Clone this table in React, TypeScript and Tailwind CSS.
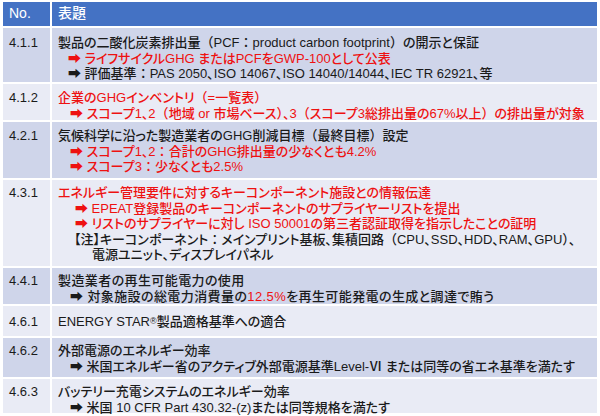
import React from "react";

type Seg = { t: string; red?: boolean };
type Line = { segs: Seg[]; indent: string };
type Row = { no: string; dark: boolean; h: string; pt: string; lines: Line[] };

const L = (indent: string, ...segs: Seg[]): Line => ({ indent, segs });
const B = (t: string): Seg => ({ t });
const R = (t: string): Seg => ({ t, red: true });

const ROWS: Row[] = [
  {
    no: "4.1.1",
    dark: true,
    h: "h-[56px]",
    pt: "pt-[7px]",
    lines: [
      L("pl-0", B("製品の二酸化炭素排出量（PCF：product carbon footprint）の開示と保証")),
      L("pl-[10px]", R("➡ ライフサイクルGHG またはPCFをGWP-100として公表")),
      L("pl-[10px]", B("➡ 評価基準：PAS 2050、ISO 14067、ISO 14040/14044、IEC TR 62921、等")),
    ],
  },
  {
    no: "4.1.2",
    dark: false,
    h: "h-[38px]",
    pt: "pt-[6px]",
    lines: [
      L("pl-0", R("企業のGHGインベントリ（=一覧表）")),
      L("pl-[12px]", R("➡ スコープ1、2（地域 or 市場ベース）、3（スコープ3総排出量の67%以上）の排出量が対象")),
    ],
  },
  {
    no: "4.2.1",
    dark: true,
    h: "h-[58px]",
    pt: "pt-[6px]",
    lines: [
      L("pl-0", B("気候科学に沿った製造業者のGHG削減目標（最終目標）設定")),
      L("pl-[12px]", R("➡ スコープ1、2：合計のGHG排出量の少なくとも4.2%")),
      L("pl-[12px]", R("➡ スコープ3：少なくとも2.5%")),
    ],
  },
  {
    no: "4.3.1",
    dark: false,
    h: "h-[88px]",
    pt: "pt-[5px]",
    lines: [
      L("pl-0", R("エネルギー管理要件に対するキーコンポーネント施設との情報伝達")),
      L("pl-[17px]", R("➡ EPEAT登録製品のキーコンポーネントのサプライヤーリストを提出")),
      L("pl-[17px]", R("➡ リストのサプライヤーに対し ISO 50001の第三者認証取得を指示したことの証明")),
      L("pl-[16px]", B("【注】キーコンポーネント：メインプリント基板、集積回路（CPU、SSD、HDD、RAM、GPU）、")),
      L("pl-[34px]", B("電源ユニット、ディスプレイパネル")),
    ],
  },
  {
    no: "4.4.1",
    dark: true,
    h: "h-[38px]",
    pt: "pt-[5px]",
    lines: [
      L("pl-0 tracking-[0.4px]", B("製造業者の再生可能電力の使用")),
      L("pl-[12px] tracking-[0.4px]", B("➡ 対象施設の総電力消費量の"), R("12.5%"), B("を再生可能発電の生成と調達で賄う")),
    ],
  },
  {
    no: "4.6.1",
    dark: false,
    h: "h-[32px]",
    pt: "pt-[8px]",
    lines: [L("pl-0", B("ENERGY STAR"), { t: "®" }, B("製品適格基準への適合"))],
  },
  {
    no: "4.6.2",
    dark: true,
    h: "h-[41px]",
    pt: "pt-[5px]",
    lines: [
      L("pl-0", B("外部電源のエネルギー効率")),
      L("pl-[12px]", B("➡ 米国エネルギー省のアクティブ外部電源基準Level-Ⅵ または同等の省エネ基準を満たす")),
    ],
  },
  {
    no: "4.6.3",
    dark: false,
    h: "h-[36px]",
    pt: "pt-[5px]",
    lines: [
      L("pl-0", B("バッテリー充電システムのエネルギー効率")),
      L("pl-[12px]", B("➡ 米国 10 CFR Part 430.32-(z)または同等規格を満たす")),
    ],
  },
];

// full-width brackets and colons keep their full width, the rest stays proportional
function Text({ t }: { t: string }) {
  const parts = t.split(/([（）：])/);
  return (
    <>
      {parts.map((p, i) =>
        /^[（）：]$/.test(p) ? (
          <span key={i} className="[font-feature-settings:normal]">
            {p}
          </span>
        ) : (
          p
        )
      )}
    </>
  );
}

export default function App() {
  return (
    <div
      className="w-[600px] h-[416px] bg-white overflow-hidden px-[3px] pt-[2px] text-[13px] leading-[15.5px] font-medium text-[#1a1a1a] [font-feature-settings:'palt']"
      style={{ fontFamily: '"Liberation Sans", "Noto Sans CJK JP", sans-serif' }}
    >
      {/* Header */}
      <div className="flex h-[26px] border-b-2 border-white">
        <div className="w-[49px] shrink-0 bg-[#4472c4] border-r-2 border-white pl-[6px] flex items-center text-white text-[14px]">
          No.
        </div>
        <div className="flex-1 bg-[#4472c4] pl-[6px] flex items-center text-white text-[14px]">
          表題
        </div>
      </div>

      {ROWS.map((row) => {
        const bg = row.dark ? "bg-[#cfd5ea]" : "bg-[#e9ebf5]";
        return (
          <div key={row.no} className={`flex border-b-2 border-white ${row.h}`}>
            <div className={`w-[49px] shrink-0 border-r-2 border-white pl-[6px] ${row.pt} ${bg}`}>{row.no}</div>
            <div className={`flex-1 pl-[6px] ${row.pt} ${bg}`}>
              {row.lines.map((ln, i) => (
                <div key={i} className={`whitespace-nowrap ${ln.indent}`}>
                  {ln.segs.map((s, j) => (
                    <span
                      key={j}
                      className={s.red ? "text-[#ee1111]" : s.t === "®" ? "text-[9px] align-top" : ""}
                    >
                      <Text t={s.t} />
                    </span>
                  ))}
                </div>
              ))}
            </div>
          </div>
        );
      })}
    </div>
  );
}
